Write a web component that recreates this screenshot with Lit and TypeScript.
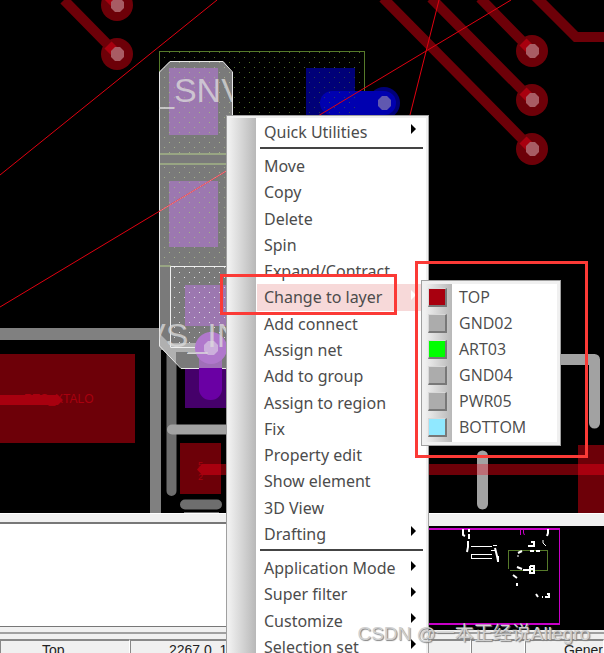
import { LitElement, html, svg, css } from "lit";
import { customElement } from "lit/decorators.js";
import { classMap } from "lit/directives/class-map.js";

interface Entry {
  label: string;
  sub?: boolean;
  active?: boolean;
}

const GROUPS: Entry[][] = [
  [{ label: "Quick Utilities", sub: true }],
  [
    { label: "Move" },
    { label: "Copy" },
    { label: "Delete" },
    { label: "Spin" },
    { label: "Expand/Contract" },
    { label: "Change to layer", sub: true, active: true },
    { label: "Add connect" },
    { label: "Assign net" },
    { label: "Add to group" },
    { label: "Assign to region" },
    { label: "Fix" },
    { label: "Property edit" },
    { label: "Show element" },
    { label: "3D View" },
    { label: "Drafting", sub: true },
  ],
  [
    { label: "Application Mode", sub: true },
    { label: "Super filter", sub: true },
    { label: "Customize", sub: true },
    { label: "Selection set", sub: true },
  ],
];

const LAYERS = [
  { name: "TOP", color: "red" },
  { name: "GND02", color: "gray" },
  { name: "ART03", color: "green" },
  { name: "GND04", color: "gray" },
  { name: "PWR05", color: "gray" },
  { name: "BOTTOM", color: "cyan" },
];

const VIAS = [
  [117, 5],
  [117, 54],
  [532, 51],
  [532, 100],
  [532, 149],
];

@customElement("board-canvas")
export class BoardCanvas extends LitElement {
  static styles = css`
    :host {
      display: block;
      background: #000;
      overflow: hidden;
    }
    svg {
      display: block;
      width: 100%;
      height: 100%;
    }
    .copper { fill: #6d0008; }
    .hot { fill: #a8000f; }
    .trace { fill: none; stroke: #6d0008; stroke-width: 10; }
    .stub { stroke: #a8000f; stroke-width: 10; }
    .hole { fill: #a85c64; }
    .rat { stroke: #e00010; stroke-width: 1; }
    .green { fill: none; stroke: #567a2a; }
    .pad { fill: #9c78b0; }
    .net { font-family: "Liberation Sans", Arial, sans-serif; font-size: 34px; fill: #dcdcdc; fill-opacity: 0.75; }
    .small { font-family: "Liberation Sans", Arial, sans-serif; font-size: 12px; fill: #a8000f; }
    .tiny { font-family: "Liberation Sans", Arial, sans-serif; font-size: 9px; fill: #a8000f; }
  `;

  render() {
    return html`<svg aria-label="Board layout">
      <defs>
        <pattern id="dots" width="10" height="10" patternUnits="userSpaceOnUse">
          <rect x="4" y="7" width="1" height="1" fill="#4f6a26" />
          <rect x="9" y="2" width="1" height="1" fill="#4f6a26" />
        </pattern>
        <pattern id="lit" width="10" height="10" patternUnits="userSpaceOnUse">
          <rect x="4" y="7" width="1" height="1" fill="#a4b088" />
          <rect x="9" y="2" width="1" height="1" fill="#a4b088" />
        </pattern>
        <pattern id="white" width="10" height="10" patternUnits="userSpaceOnUse">
          <rect x="4" y="7" width="1" height="1" fill="#e0e0e0" />
          <rect x="9" y="2" width="1" height="1" fill="#e0e0e0" />
        </pattern>
        <clipPath id="body">
          <path d="M159 72 170 61H223L232 72V368H181L159 346Z" />
        </clipPath>
      </defs>

      <g>
        <path class="trace" d="M64 0 117 54M112 0l5 5M383 -2 532 149M431 -2 532 100M480 -2 532 51M534 -5 576 37H700" />
        ${VIAS.map(
          ([x, y]) => svg`<circle class="copper" cx=${x} cy=${y} r="16" />
            <path class="stub" d=${`M${x - 9} ${y - 9}L${x} ${y}`} />
            <path class="hole" d=${`M${x - 2} ${y - 7}h5l4 4v6l-4 4h-5l-4 -4v-6z`} />`,
        )}
      </g>

      <rect class="green" x="159.5" y="51.5" width="205" height="102" />
      <rect x="160" y="52" width="204" height="101" fill="url(#dots)" />

      <rect x="306" y="68" width="49" height="68" fill="#000078" />
      <circle cx="384" cy="103" r="16" fill="#000078" />
      <rect x="320" y="91" width="76" height="24" rx="12" fill="#0000b0" />
      <path fill="#6058b0" d="M382 96h5l4 4v6l-4 4h-5l-4-4v-6z" />
      <rect x="306" y="68" width="49" height="48" fill="url(#dots)" fill-opacity=".6" />

      <path fill="#808080" d="M0 328H170V350H161V600H150V340H0Z" />
      <path stroke="#6e6e6e" stroke-width="10" stroke-linecap="round" d="M171.500 350V491M185 504.500H217" />
      <path stroke="#a2a2a2" stroke-width="10" stroke-linecap="round" d="M172 429.500H300" />
      <rect x="184" y="512" width="35" height="1" fill="#6e6e6e" />
      <rect x="185" y="367" width="60" height="41" fill="#45006a" />

      <rect class="copper" x="0" y="354" width="135" height="89" />
      <path class="hot" d="M0 395H58l5 5-5 5H0Z" />
      <text class="small" x="24" y="403">RTC_XTALO</text>
      <rect class="copper" x="180" y="443" width="41" height="51" />
      <rect class="copper" x="202" y="464" width="600" height="11" />
      <path class="hot" d="M221 464H202l-5 5.500 5 5.500H221Z" />
      <text class="tiny" x="198" y="468">5</text>
      <text class="tiny" x="198" y="480">2</text>

      <path fill="none" stroke="#a2a2a2" stroke-width="11" stroke-linecap="round" stroke-linejoin="round" d="M540 359.500H594.500V423M482.500 456V504" />
      <rect x="477" y="464" width="11" height="11" fill="#bd6e76" />
      <rect class="copper" x="578" y="445" width="400" height="90" />
      <rect class="hot" x="578" y="464" width="400" height="11" />

      <path fill="#7a7a7a" d="M159 72 170 61H223L232 72V368H181L159 346Z" />
      <g clip-path="url(#body)">
        <path fill="#b0b0b0" d="M159 328 171 343H232V352H176V368L159 350Z" />
        <path fill="#7a7a7a" d="M160 266H170V344L160 334Z" />
        <rect class="pad" x="169" y="68" width="49" height="67" />
        <rect class="pad" x="169" y="181" width="49" height="66" />
        <rect class="pad" x="185" y="285" width="60" height="41" />
        <rect x="159" y="61" width="74" height="92" fill="url(#lit)" />
        <rect x="159" y="166" width="74" height="99" fill="url(#lit)" />
        <rect x="171" y="267" width="62" height="78" fill="url(#white)" />
        <path stroke="#98a583" stroke-width="2" d="M159 154H232M159 164H232M159 266H171" />
        <path d="M170.500 347V266.500H232M170.500 347.500H232" fill="none" stroke="#eee" />
        <path stroke="#c4c4c4" d="M187 353.500H206" />
      </g>
      <path d="M159.500 72 170 61.500H223L232.500 72V368.500H181L159.500 346Z" fill="none" stroke="#e8e8e8" />
      <rect x="199" y="352" width="23" height="48" rx="11" fill="#6a00a4" />
      <rect x="199" y="352" width="23" height="16" fill="#a070b8" />
      <circle cx="211" cy="348" r="16" fill="#b078cc" />
      <path fill="#ccb0dc" d="M208 341h6l4 4v6l-4 4h-6l-4-4v-6z" />
      <path class="rat" d="M217 0 0 175M511 0 0 307M439 0 410 115" />
      <path stroke="#ee8088" d="M232 167.500 160 211" />
      <g clip-path="url(#body)">
        <text class="net" x="155" y="102">_SNV</text>
        <text class="net" x="143" y="347">VS_IN</text>
      </g>
    </svg>`;
  }
}

@customElement("overview-map")
export class OverviewMap extends LitElement {
  static styles = css`
    :host {
      display: block;
      background: #000;
      overflow: hidden;
    }
    svg { display: block; width: 100%; height: 100%; }
  `;

  render() {
    return html`<svg aria-label="Board overview">
      <g fill="none">
        <path stroke="#c800c8" stroke-width="2" d="M-10 3H137M0 98H137" />
        <path stroke="#c800c8" d="M136.500 2V97M97.500 2v7M100.500 2v5l1 2" />
        <path stroke="#567a2a" d="M85 24.500H125M85.500 24V43M124.500 24V45M87 44.500H125" />
        <path stroke="#fff" d="M48 20.500H69M48 28.500H69M48 32.500H69M48.500 28v4M70 19.500h4M68 24.500h5M120 14v3l3 3M94 30h2" />
        <path stroke="#fff" stroke-width="2" d="M40 3v6l2 1M46 3v3M46 8v5M45 15v6l-1 5M72 22l2 8 1 5M75 30v6M125 3v4l-1 3M108 16h3v4h-6M107 25h4M113 25h4M95 27l4-2M94 41l5 2M100 44h7M107 40h4v7h-4v-7M107 43h4M90 49l4 3M94 57v3M113 68l2 3M119 71h1M124 68h2v3h-4" />
      </g>
    </svg>`;
  }
}

@customElement("layer-menu")
export class LayerMenu extends LitElement {
  static styles = css`
    :host {
      display: block;
      box-sizing: border-box;
      border: 1px solid #a0a0a0;
      background: #f0f0f0;
      padding: 3px;
    }
    .list {
      padding-bottom: 2px;
      background: linear-gradient(90deg, #f0f0f0, #b8b8b8) left / 27px 100% no-repeat #fff;
    }
    button {
      display: flex;
      align-items: center;
      gap: 12px;
      width: 100%;
      height: 26px;
      padding: 0 0 0 3px;
      border: 0;
      background: none;
      color: #4c4c4c;
      font: 16px/26px "Open Sans", "Noto Sans", sans-serif;
      text-align: left;
    }
    .swatch {
      box-sizing: border-box;
      width: 19px;
      height: 19px;
      border: 1px solid #d8d8d8;
      border-right: 2px solid #787878;
      border-bottom: 2px solid #787878;
    }
    .red { background: #a8000f; }
    .gray { background: #acacac; }
    .green { background: #00ff00; }
    .cyan { background: #90e8ff; }
  `;

  render() {
    return html`<div class="list" role="menu">
      ${LAYERS.map(
        (layer) => html`<button role="menuitem">
          <span class="swatch ${layer.color}"></span>${layer.name}
        </button>`,
      )}
    </div>`;
  }
}

@customElement("context-menu")
export class ContextMenu extends LitElement {
  static styles = css`
    :host {
      display: block;
      box-sizing: border-box;
      border: 1px solid #a0a0a0;
      background: #f0f0f0;
      padding: 2px;
    }
    .list {
      background: linear-gradient(90deg, #f0f0f0, #b8b8b8) left / 27px 100% no-repeat #fff;
    }
    .group {
      display: grid;
      grid-auto-rows: 1fr;
    }
    .short { height: 27px; }
    .long { height: 394px; }
    .tail { height: 105px; }
    hr {
      height: 2px;
      margin: 2px 3px 4px 31px;
      border: 0;
      background: #444;
    }
    button {
      display: flex;
      align-items: center;
      justify-content: space-between;
      margin-left: 28px;
      padding: 0 10px 0 7px;
      border: 0;
      background: none;
      color: #4c4c4c;
      font: 16px/24px "Noto Sans", sans-serif;
      text-align: left;
      white-space: nowrap;
    }
    .active { background: #f7d9d9; }
    .arrow { width: 5px; height: 10px; margin-bottom: 5px; fill: #000; }
    .active .arrow { fill: #fff; }
  `;

  render() {
    const sizes = ["short", "long", "tail"];
    return html`<div class="list" role="menu">
      ${GROUPS.map(
        (group, i) => html`${i ? html`<hr />` : ""}
          <div class="group ${sizes[i]}">
            ${group.map(
              (e) => html`<button role="menuitem" class=${classMap({ active: !!e.active })}>
                <span>${e.label}</span>
                ${e.sub
                  ? html`<svg class="arrow" viewBox="0 0 5 10"><path d="M0 0 5 5 0 10Z" /></svg>`
                  : ""}
              </button>`,
            )}
          </div>`,
      )}
    </div>`;
  }
}

@customElement("app-root")
export class AppRoot extends LitElement {
  static styles = css`
    :host {
      position: relative;
      display: flex;
      flex-direction: column;
      height: 100vh;
      overflow: hidden;
      background: #f0f0f0;
    }
    board-canvas { flex: 1; min-height: 0; }
    .dock {
      display: grid;
      grid-template-columns: minmax(0, 7fr) minmax(0, 3fr);
      height: 118px;
      flex: none;
      border-top: 1px solid #fff;
      border-bottom: 2px solid #a0a0a0;
    }
    .console {
      box-sizing: border-box;
      margin: 8px 0 5px;
      border: solid #777;
      border-width: 2px 0 1px;
      background: #fff;
    }
    overview-map { margin: 12px 0 2px; }
    .status {
      display: grid;
      grid-template-columns: 130px 1fr 54px 79px;
      flex: none;
      height: 14px;
      margin-top: 5px;
      overflow: hidden;
      color: #222;
      font: 14px/18px "Liberation Sans", Arial, sans-serif;
    }
    .cell {
      border-top: 2px solid #888;
      border-right: 1px solid #fff;
      border-left: 1px solid #888;
      white-space: nowrap;
      overflow: hidden;
    }
    .layer { padding-left: 41px; }
    .coords { padding-left: 38px; }
    .mode { padding-left: 38px; }
    context-menu {
      position: absolute;
      left: 226px;
      top: 115px;
      width: 203px;
    }
    layer-menu {
      position: absolute;
      left: 421px;
      top: 280px;
      width: 140px;
    }
    .mark {
      position: absolute;
      box-sizing: border-box;
      border: 3px solid #fb3a36;
      pointer-events: none;
    }
    .item-mark { left: 220px; top: 274px; width: 177px; height: 41px; }
    .layers-mark { left: 415px; top: 261px; width: 173px; height: 197px; }
    .credit {
      position: absolute;
      right: 14px;
      bottom: 7px;
      color: #d0d0d0;
      font: 19px/24px "Liberation Sans", "Noto Sans CJK SC", sans-serif;
      text-shadow: 1px 1px 1px #808080;
      white-space: nowrap;
    }
  `;

  render() {
    return html`
      <board-canvas></board-canvas>
      <div class="dock">
        <div class="console"></div>
        <overview-map></overview-map>
      </div>
      <div class="status">
        <div class="cell layer">Top</div>
        <div class="cell coords">2267.0, 1</div>
        <div class="cell"></div>
        <div class="cell mode">General</div>
      </div>
      <context-menu></context-menu>
      <layer-menu></layer-menu>
      <div class="mark item-mark"></div>
      <div class="mark layers-mark"></div>
      <div class="credit">CSDN @一本正经说Allegro</div>
    `;
  }
}
